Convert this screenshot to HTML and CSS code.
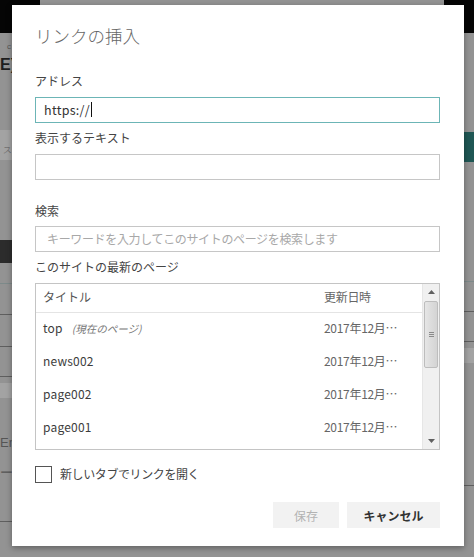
FILE: index.html
```html
<!DOCTYPE html>
<html lang="ja">
<head>
<meta charset="utf-8">
<title>リンクの挿入</title>
<link rel="stylesheet" href="styles.css">
</head>
<body>
<div class="page">
  <div class="side side-left">
    <div class="blk black h33"></div>
    <div class="blk gray h97"><span class="frag frag-c">c</span><span class="frag frag-e">E)</span></div>
    <div class="blk light h30"><span class="frag frag-s">ス</span></div>
    <div class="blk gray h80"></div>
    <div class="blk dark h23"></div>
    <div class="blk gray h21 line-b-light"></div>
    <div class="blk gray h31 line-b"></div>
    <div class="blk gray h32 line-b"></div>
    <div class="blk gray h30 line-b"></div>
    <div class="blk gray h6"></div>
    <div class="blk light h15"></div>
    <div class="blk gray h50"><span class="frag frag-ent">Ent</span></div>
    <div class="blk gray h30"><span class="frag frag-paren">ー)</span></div>
    <div class="blk gray h44 line-b"></div>
    <div class="blk gray h40"></div>
  </div>
  <div class="spacer"></div>
  <div class="side side-right">
    <div class="blk black h33"></div>
    <div class="blk gray h99"><span class="frag frag-menu">≡</span></div>
    <div class="blk teal h30"><span class="frag frag-ii">II</span></div>
    <div class="blk gray h55"><span class="frag frag-dots">···</span></div>
    <div class="blk gray h65 line-b-light"></div>
    <div class="blk gray h30 line-b"></div>
    <div class="blk gray h30 line-b"></div>
    <div class="blk gray h6"></div>
    <div class="blk light h15"><span class="frag frag-arrow">▸</span></div>
    <div class="blk gray h123 line-b"></div>
    <div class="blk gray h40"></div>
  </div>
</div>

<div class="modal" role="dialog" aria-label="リンクの挿入">
  <h1 class="modal-title">リンクの挿入</h1>

  <label class="field-label lbl-address">アドレス</label>
  <div class="input input-focus"><span class="input-value">https://</span><span class="caret"></span></div>

  <label class="field-label lbl-text">表示するテキスト</label>
  <div class="input"></div>

  <label class="field-label lbl-search">検索</label>
  <div class="input input-search"><span class="placeholder">キーワードを入力してこのサイトのページを検索します</span></div>

  <label class="field-label lbl-recent">このサイトの最新のページ</label>
  <div class="list">
    <div class="list-body">
      <div class="list-head">
        <span class="col-title">タイトル</span>
        <span class="col-date">更新日時</span>
      </div>
      <div class="list-row">
        <span class="col-title"><span class="row-name">top</span><em class="current">(現在のページ)</em></span>
        <span class="col-date">2017年12月…</span>
      </div>
      <div class="list-row">
        <span class="col-title"><span class="row-name">news002</span></span>
        <span class="col-date">2017年12月…</span>
      </div>
      <div class="list-row">
        <span class="col-title"><span class="row-name">page002</span></span>
        <span class="col-date">2017年12月…</span>
      </div>
      <div class="list-row">
        <span class="col-title"><span class="row-name">page001</span></span>
        <span class="col-date">2017年12月…</span>
      </div>
    </div>
    <div class="scrollbar">
      <div class="sb-btn">
        <svg width="7" height="4" viewBox="0 0 7 4"><path d="M0 4 L3.5 0 L7 4 Z" fill="#606060"/></svg>
      </div>
      <div class="sb-track">
        <div class="sb-thumb">
          <span class="grip"></span><span class="grip"></span><span class="grip"></span>
        </div>
      </div>
      <div class="sb-btn">
        <svg width="7" height="4" viewBox="0 0 7 4"><path d="M0 0 L3.5 4 L7 0 Z" fill="#606060"/></svg>
      </div>
    </div>
  </div>

  <label class="check-row">
    <span class="checkbox"></span>
    <span class="check-label">新しいタブでリンクを開く</span>
  </label>

  <div class="actions">
    <button class="btn btn-save" disabled>保存</button>
    <button class="btn btn-cancel">キャンセル</button>
  </div>
</div>
</body>
</html>
```

FILE: styles.css
```css
* { box-sizing: border-box; }

html, body {
  margin: 0;
  padding: 0;
}

body {
  width: 474px;
  height: 557px;
  overflow: hidden;
  background: #939393;
  font-family: "Noto Sans CJK JP", "Noto Sans", sans-serif;
  position: relative;
}

/* ---- background page (dimmed, under the dialog) ---- */
.page {
  display: flex;
  width: 474px;
  height: 557px;
}
.side {
  display: flex;
  flex-direction: column;
  overflow: hidden;
  flex: none;
}
.side-left { width: 40px; }
.side-right { width: 30px; }
.spacer { flex: 1; background: #939393; }

.blk { position: relative; overflow: hidden; flex: none; }
.black { background: #050505; }
.gray { background: #939393; }
.light { background: #a3a3a3; }
.dark { background: #2c2c2c; }
.teal { background: #1f5754; }
.line-b { border-bottom: 1px solid #5f5f5f; }
.line-b-light { border-bottom: 1px solid #7d8a8a; }

.h6 { height: 6px; }
.h15 { height: 15px; }
.h21 { height: 21px; }
.h23 { height: 23px; }
.h30 { height: 30px; }
.h31 { height: 31px; }
.h32 { height: 32px; }
.h33 { height: 33px; }
.h40 { height: 40px; }
.h44 { height: 44px; }
.h50 { height: 50px; }
.h55 { height: 55px; }
.h65 { height: 65px; }
.h80 { height: 80px; }
.h97 { height: 97px; }
.h99 { height: 99px; }
.h123 { height: 123px; }

.frag {
  display: block;
  font-family: "Liberation Sans", sans-serif;
  color: #3a3a3a;
  white-space: nowrap;
  line-height: 1;
}
.frag-c { font-size: 8px; margin: 10px 0 0 7px; color: #555; }
.frag-e { font-size: 16px; margin: 6px 0 0 0; color: #1e1e1e; font-weight: bold; }
.frag-s { font-size: 9px; margin: 16px 0 0 3px; color: #666; }
.frag-ent { font-size: 13px; margin: 38px 0 0 0; color: #555; }
.frag-paren { font-size: 13px; margin: 18px 0 0 0; color: #555; }
.frag-menu { font-size: 14px; margin: 21px 0 0 0; color: #4a4a4a; }
.frag-ii { font-size: 11px; margin: 8px 0 0 1px; color: #9fc0bd; font-weight: bold; }
.frag-dots { font-size: 10px; margin: 20px 0 0 0; color: #555; }
.frag-arrow { font-size: 9px; margin: 3px 0 0 3px; color: #333; }

/* ---- modal ---- */
.modal {
  position: absolute;
  left: 12px;
  top: 5px;
  width: 452px;
  height: 541px;
  background: #ffffff;
  box-shadow: 0 2px 6px rgba(0, 0, 0, 0.35);
  padding: 18px 24px 18px 23px;
  display: flex;
  flex-direction: column;
}

.modal-title {
  margin: 0;
  font-size: 17.5px;
  line-height: 26px;
  font-weight: 300;
  color: #666;
  letter-spacing: 0;
}

.field-label {
  display: block;
  font-size: 12px;
  line-height: 18px;
  color: #444;
  letter-spacing: 0;
}
.lbl-address { margin-top: 23px; }
.lbl-text { margin-top: 6px; }
.lbl-search { margin-top: 22px; }
.lbl-recent { margin-top: 6px; }

.input {
  margin-top: 7px;
  height: 26px;
  border: 1px solid #c6c6c6;
  background: #fff;
  display: flex;
  align-items: center;
  padding: 0 8px;
}
.input-focus { border-color: #6cb5b6; }
.input-search { margin-top: 6px; padding-left: 11px; }

.input-value {
  font-size: 12.5px;
  color: #333;
  letter-spacing: 0.3px;
}
.caret {
  display: inline-block;
  width: 1px;
  height: 15px;
  background: #111;
  margin-left: 1px;
}
.placeholder {
  font-size: 12px;
  color: #a8a8a8;
  letter-spacing: -0.35px;
  white-space: nowrap;
}

/* ---- list ---- */
.list {
  margin-top: 7px;
  height: 168px;
  border: 1px solid #c4c4c4;
  display: flex;
}
.list-body {
  flex: 1;
  display: flex;
  flex-direction: column;
}
.list-head {
  height: 29px;
  border-bottom: 1px solid #e4e4e4;
  display: flex;
  align-items: center;
  font-size: 12px;
  color: #555;
  letter-spacing: 0;
  padding-bottom: 3px;
}
.list-row {
  height: 33px;
  display: flex;
  align-items: center;
  padding-bottom: 3px;
  font-size: 12px;
}
.col-title {
  width: 288px;
  padding-left: 7px;
  display: flex;
  align-items: baseline;
  white-space: nowrap;
}
.col-date {
  flex: 1;
  color: #666;
  white-space: nowrap;
  font-size: 12px;
  letter-spacing: -0.3px;
}
.row-name {
  color: #3c3c3c;
  letter-spacing: 0.2px;
}
.current {
  font-style: italic;
  color: #777;
  font-size: 10.5px;
  margin-left: 9px;
  letter-spacing: 0;
}

.scrollbar {
  width: 17px;
  flex: none;
  background: #f0f0f0;
  border-left: 1px solid #e6e6e6;
  display: flex;
  flex-direction: column;
}
.sb-btn {
  height: 16px;
  display: flex;
  align-items: center;
  justify-content: center;
  flex: none;
}
.sb-track {
  flex: 1;
  padding-top: 1px;
}
.sb-thumb {
  margin: 0 1px 0 1px;
  height: 67px;
  border: 1px solid #bdbdbd;
  border-radius: 2px;
  background: linear-gradient(to right, #e6e6e6, #dcdcdc 50%, #d4d4d4);
  display: flex;
  flex-direction: column;
  align-items: center;
  justify-content: center;
  gap: 1px;
}
.grip {
  display: block;
  width: 5px;
  height: 1px;
  background: #8a8a8a;
}

/* ---- checkbox ---- */
.check-row {
  margin-top: 15px;
  display: flex;
  align-items: center;
  gap: 8px;
}
.checkbox {
  width: 17px;
  height: 17px;
  border: 1px solid #555;
  background: #fff;
  flex: none;
}
.check-label {
  font-size: 12px;
  color: #444;
  letter-spacing: -0.4px;
  line-height: 18px;
}

/* ---- buttons ---- */
.actions {
  margin-top: 19px;
  display: flex;
  justify-content: flex-end;
  gap: 8px;
}
.btn {
  height: 26px;
  border: none;
  background: #f2f2f2;
  font-family: "Noto Sans CJK JP", "Noto Sans", sans-serif;
  font-size: 12px;
  padding: 0;
  letter-spacing: 0;
}
.btn-save {
  width: 66px;
  color: #b3b3b3;
}
.btn-cancel {
  width: 93px;
  color: #333;
  font-weight: 700;
  letter-spacing: 0;
}
```
